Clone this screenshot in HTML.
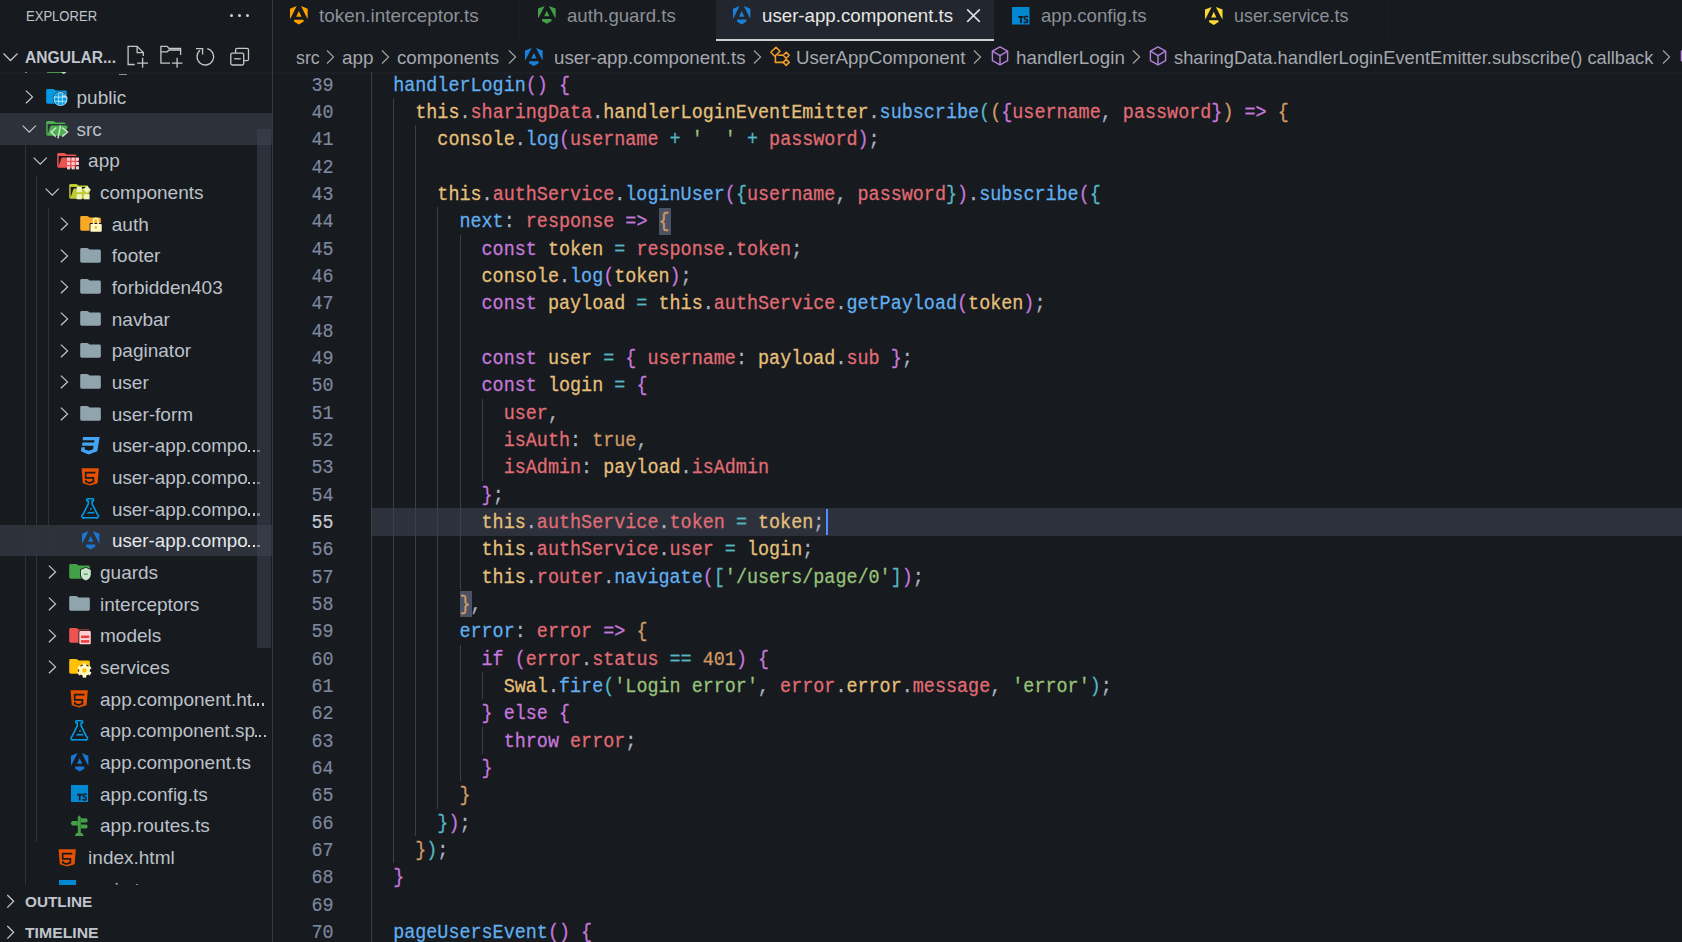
<!DOCTYPE html><html><head><meta charset="utf-8"><title>VS Code</title><style>
html,body{margin:0;padding:0;width:1682px;height:942px;overflow:hidden;background:#171a1f;}
body{position:relative;font-family:"Liberation Sans",sans-serif;}
.t{position:absolute;white-space:pre;}
.i{position:absolute;overflow:visible;}
.r{position:absolute;}
.code{position:absolute;white-space:pre;font-family:"Liberation Mono",monospace;}
</style></head><body>
<div class="r" style="left:0;top:0;width:272px;height:942px;overflow:hidden">
<div class="r" style="left:0;top:113.10px;width:272px;height:31.67px;background:#2c313a"></div>
<div class="r" style="left:0;top:524.81px;width:272px;height:31.67px;background:#2c313a"></div>
<div class="r" style="left:25px;top:144.77px;width:1px;height:760.08px;background:#2f333b"></div>
<div class="r" style="left:36px;top:176.44px;width:1px;height:665.07px;background:#2f333b"></div>
<div class="r" style="left:48px;top:208.11px;width:1px;height:348.37px;background:#2f333b"></div>
<svg class="i" style="left:24.80px;top:81.43px;width:16px;height:32px" viewBox="0 0 16 32"><path d="M0.9 9.6 L7.5 15.9 L0.9 22.2" fill="none" stroke="#c5c5c5" stroke-width="1.25"/></svg>
<svg class="i" style="left:46.20px;top:81.43px;width:30px;height:32px" viewBox="0 0 30 32"><path d="M13.844 7.536l-1.288-1.072A2 2 0 0 0 11.276 6H4a2 2 0 0 0-2 2v16a2 2 0 0 0 2 2h24a2 2 0 0 0 2-2V10a2 2 0 0 0-2-2H15.124a2 2 0 0 1-1.28-.464z" fill="#039be5" transform="translate(-1.27 3.55) scale(0.737)"/><circle cx="14.5" cy="18.1" r="7.6" fill="#171a1f"/><circle cx="14.5" cy="18.1" r="7" fill="#b3e5fc"/><g fill="#039be5"><path d="M9.2 14.6 Q11 12.2 12.6 12 L12.2 15.6 H9.2Z"/><rect x="13.2" y="12.2" width="2.6" height="3.4"/><path d="M16.4 12 Q18 12.2 19.8 14.6 H16.8Z"/><rect x="8.7" y="16.6" width="3.5" height="3.2"/><rect x="13.2" y="16.6" width="2.6" height="3.2"/><rect x="16.8" y="16.6" width="3.5" height="3.2"/><path d="M9.2 20.8 H12.2 L12.6 24.2 Q11 24 9.2 21.6Z"/><rect x="13.2" y="20.8" width="2.6" height="3.4"/><path d="M16.8 20.8 H19.8 Q18 24 16.4 24.2Z"/></g></svg>
<div class="t" style="left:76.50px;top:87.95px;font-size:19px;line-height:19px;color:#bcc1c9;font-weight:normal;">public</div>
<svg class="i" style="left:22.00px;top:113.10px;width:16px;height:32px" viewBox="0 0 16 32"><path d="M0.7 12.6 L7.25 19.2 L13.8 12.6" fill="none" stroke="#c5c5c5" stroke-width="1.25"/></svg>
<svg class="i" style="left:46.20px;top:113.10px;width:30px;height:32px" viewBox="0 0 30 32"><path d="M28.967 12H9.442a2 2 0 0 0-1.898 1.368L4 24V10h24a2 2 0 0 0-2-2H15.124a2 2 0 0 1-1.28-.464l-1.288-1.072A2 2 0 0 0 11.276 6H4a2 2 0 0 0-2 2v16a2 2 0 0 0 2 2h22l4.805-11.212A2 2 0 0 0 28.967 12z" fill="#4caf50" transform="translate(-1.27 3.55) scale(0.737)"/><g fill="none" stroke="#c8e6c9" stroke-width="1.5"><path d="M10.3 14.5 L5.1 19.1 L9.8 23.6"/><path d="M14.5 12.4 L12 25.3"/><path d="M16.1 14.5 L21.5 19.1 L16.1 23.6"/></g></svg>
<div class="t" style="left:76.50px;top:119.62px;font-size:19px;line-height:19px;color:#bcc1c9;font-weight:normal;">src</div>
<svg class="i" style="left:33.25px;top:144.77px;width:16px;height:32px" viewBox="0 0 16 32"><path d="M0.7 12.6 L7.25 19.2 L13.8 12.6" fill="none" stroke="#c5c5c5" stroke-width="1.25"/></svg>
<svg class="i" style="left:57.20px;top:144.77px;width:30px;height:32px" viewBox="0 0 30 32"><path d="M28.967 12H9.442a2 2 0 0 0-1.898 1.368L4 24V10h24a2 2 0 0 0-2-2H15.124a2 2 0 0 1-1.28-.464l-1.288-1.072A2 2 0 0 0 11.276 6H4a2 2 0 0 0-2 2v16a2 2 0 0 0 2 2h22l4.805-11.212A2 2 0 0 0 28.967 12z" fill="#ef5350" transform="translate(-1.27 3.55) scale(0.737)"/><g fill="#ffcdd2"><rect x="10.05" y="12.65" width="3.1" height="3.1"/><rect x="10.05" y="16.95" width="3.1" height="3.1"/><rect x="10.05" y="21.25" width="3.1" height="3.1"/><rect x="14.55" y="12.65" width="3.1" height="3.1"/><rect x="14.55" y="16.95" width="3.1" height="3.1"/><rect x="14.55" y="21.25" width="3.1" height="3.1"/><rect x="18.85" y="12.65" width="3.1" height="3.1"/><rect x="18.85" y="16.95" width="3.1" height="3.1"/><rect x="18.85" y="21.25" width="3.1" height="3.1"/></g></svg>
<div class="t" style="left:88.10px;top:151.29px;font-size:19px;line-height:19px;color:#bcc1c9;font-weight:normal;">app</div>
<svg class="i" style="left:44.50px;top:176.44px;width:16px;height:32px" viewBox="0 0 16 32"><path d="M0.7 12.6 L7.25 19.2 L13.8 12.6" fill="none" stroke="#c5c5c5" stroke-width="1.25"/></svg>
<svg class="i" style="left:69.20px;top:176.44px;width:30px;height:32px" viewBox="0 0 30 32"><path d="M28.967 12H9.442a2 2 0 0 0-1.898 1.368L4 24V10h24a2 2 0 0 0-2-2H15.124a2 2 0 0 1-1.28-.464l-1.288-1.072A2 2 0 0 0 11.276 6H4a2 2 0 0 0-2 2v16a2 2 0 0 0 2 2h22l4.805-11.212A2 2 0 0 0 28.967 12z" fill="#c0ca33" transform="translate(-1.27 3.55) scale(0.737)"/><g fill="#f0f4c3"><rect x="7.7" y="10.9" width="5.1" height="5.3"/><rect x="7.7" y="18.2" width="5.1" height="5.1"/><rect x="14.8" y="18.2" width="5.8" height="5.1"/><path d="M17.9 9.8 L21.5 13.4 L17.9 17 L14.3 13.4Z"/></g></svg>
<div class="t" style="left:100.00px;top:182.96px;font-size:19px;line-height:19px;color:#bcc1c9;font-weight:normal;">components</div>
<svg class="i" style="left:59.90px;top:208.11px;width:16px;height:32px" viewBox="0 0 16 32"><path d="M0.9 9.6 L7.5 15.9 L0.9 22.2" fill="none" stroke="#c5c5c5" stroke-width="1.25"/></svg>
<svg class="i" style="left:80.30px;top:208.11px;width:30px;height:32px" viewBox="0 0 30 32"><path d="M13.844 7.536l-1.288-1.072A2 2 0 0 0 11.276 6H4a2 2 0 0 0-2 2v16a2 2 0 0 0 2 2h24a2 2 0 0 0 2-2V10a2 2 0 0 0-2-2H15.124a2 2 0 0 1-1.28-.464z" fill="#f9a825" transform="translate(-1.27 3.55) scale(0.737)"/><rect x="9.6" y="15.1" width="12.9" height="9.5" rx="1" fill="#171a1f"/><rect x="10.4" y="15.9" width="11.3" height="7.9" rx="0.8" fill="#fff9c4"/><path d="M13.6 16.5 V12.6 A2.2 2.2 0 0 1 18 12.6 V16.5" fill="none" stroke="#fff9c4" stroke-width="1.6"/><circle cx="15.8" cy="19.5" r="1.2" fill="#f9a825"/></svg>
<div class="t" style="left:111.80px;top:214.63px;font-size:19px;line-height:19px;color:#bcc1c9;font-weight:normal;">auth</div>
<svg class="i" style="left:59.90px;top:239.78px;width:16px;height:32px" viewBox="0 0 16 32"><path d="M0.9 9.6 L7.5 15.9 L0.9 22.2" fill="none" stroke="#c5c5c5" stroke-width="1.25"/></svg>
<svg class="i" style="left:80.30px;top:239.78px;width:30px;height:32px" viewBox="0 0 30 32"><path d="M13.844 7.536l-1.288-1.072A2 2 0 0 0 11.276 6H4a2 2 0 0 0-2 2v16a2 2 0 0 0 2 2h24a2 2 0 0 0 2-2V10a2 2 0 0 0-2-2H15.124a2 2 0 0 1-1.28-.464z" fill="#90a4ae" transform="translate(-1.27 3.55) scale(0.737)"/></svg>
<div class="t" style="left:111.80px;top:246.30px;font-size:19px;line-height:19px;color:#bcc1c9;font-weight:normal;">footer</div>
<svg class="i" style="left:59.90px;top:271.45px;width:16px;height:32px" viewBox="0 0 16 32"><path d="M0.9 9.6 L7.5 15.9 L0.9 22.2" fill="none" stroke="#c5c5c5" stroke-width="1.25"/></svg>
<svg class="i" style="left:80.30px;top:271.45px;width:30px;height:32px" viewBox="0 0 30 32"><path d="M13.844 7.536l-1.288-1.072A2 2 0 0 0 11.276 6H4a2 2 0 0 0-2 2v16a2 2 0 0 0 2 2h24a2 2 0 0 0 2-2V10a2 2 0 0 0-2-2H15.124a2 2 0 0 1-1.28-.464z" fill="#90a4ae" transform="translate(-1.27 3.55) scale(0.737)"/></svg>
<div class="t" style="left:111.80px;top:277.97px;font-size:19px;line-height:19px;color:#bcc1c9;font-weight:normal;">forbidden403</div>
<svg class="i" style="left:59.90px;top:303.12px;width:16px;height:32px" viewBox="0 0 16 32"><path d="M0.9 9.6 L7.5 15.9 L0.9 22.2" fill="none" stroke="#c5c5c5" stroke-width="1.25"/></svg>
<svg class="i" style="left:80.30px;top:303.12px;width:30px;height:32px" viewBox="0 0 30 32"><path d="M13.844 7.536l-1.288-1.072A2 2 0 0 0 11.276 6H4a2 2 0 0 0-2 2v16a2 2 0 0 0 2 2h24a2 2 0 0 0 2-2V10a2 2 0 0 0-2-2H15.124a2 2 0 0 1-1.28-.464z" fill="#90a4ae" transform="translate(-1.27 3.55) scale(0.737)"/></svg>
<div class="t" style="left:111.80px;top:309.64px;font-size:19px;line-height:19px;color:#bcc1c9;font-weight:normal;">navbar</div>
<svg class="i" style="left:59.90px;top:334.79px;width:16px;height:32px" viewBox="0 0 16 32"><path d="M0.9 9.6 L7.5 15.9 L0.9 22.2" fill="none" stroke="#c5c5c5" stroke-width="1.25"/></svg>
<svg class="i" style="left:80.30px;top:334.79px;width:30px;height:32px" viewBox="0 0 30 32"><path d="M13.844 7.536l-1.288-1.072A2 2 0 0 0 11.276 6H4a2 2 0 0 0-2 2v16a2 2 0 0 0 2 2h24a2 2 0 0 0 2-2V10a2 2 0 0 0-2-2H15.124a2 2 0 0 1-1.28-.464z" fill="#90a4ae" transform="translate(-1.27 3.55) scale(0.737)"/></svg>
<div class="t" style="left:111.80px;top:341.31px;font-size:19px;line-height:19px;color:#bcc1c9;font-weight:normal;">paginator</div>
<svg class="i" style="left:59.90px;top:366.46px;width:16px;height:32px" viewBox="0 0 16 32"><path d="M0.9 9.6 L7.5 15.9 L0.9 22.2" fill="none" stroke="#c5c5c5" stroke-width="1.25"/></svg>
<svg class="i" style="left:80.30px;top:366.46px;width:30px;height:32px" viewBox="0 0 30 32"><path d="M13.844 7.536l-1.288-1.072A2 2 0 0 0 11.276 6H4a2 2 0 0 0-2 2v16a2 2 0 0 0 2 2h24a2 2 0 0 0 2-2V10a2 2 0 0 0-2-2H15.124a2 2 0 0 1-1.28-.464z" fill="#90a4ae" transform="translate(-1.27 3.55) scale(0.737)"/></svg>
<div class="t" style="left:111.80px;top:372.98px;font-size:19px;line-height:19px;color:#bcc1c9;font-weight:normal;">user</div>
<svg class="i" style="left:59.90px;top:398.13px;width:16px;height:32px" viewBox="0 0 16 32"><path d="M0.9 9.6 L7.5 15.9 L0.9 22.2" fill="none" stroke="#c5c5c5" stroke-width="1.25"/></svg>
<svg class="i" style="left:80.30px;top:398.13px;width:30px;height:32px" viewBox="0 0 30 32"><path d="M13.844 7.536l-1.288-1.072A2 2 0 0 0 11.276 6H4a2 2 0 0 0-2 2v16a2 2 0 0 0 2 2h24a2 2 0 0 0 2-2V10a2 2 0 0 0-2-2H15.124a2 2 0 0 1-1.28-.464z" fill="#90a4ae" transform="translate(-1.27 3.55) scale(0.737)"/></svg>
<div class="t" style="left:111.80px;top:404.65px;font-size:19px;line-height:19px;color:#bcc1c9;font-weight:normal;">user-form</div>
<svg class="i" style="left:80.30px;top:429.80px;width:30px;height:32px" viewBox="0 0 30 32"><path d="M3.1 7.1 L19.7 7.1 L17.3 21.2 L8.6 24.4 L0.9 21.3 L1.5 17.2 L4.9 17.2 L4.6 19.4 L8.6 20.8 L13 19.3 L13.6 15.7 L2.0 15.7 L2.5 12.6 L14.1 12.6 L14.5 10.2 L2.6 10.2 Z" fill="#42a5f5"/></svg>
<div class="t" id="tree12" style="left:111.80px;top:436.32px;font-size:19px;line-height:19px;color:#bcc1c9;font-weight:normal;transform:scaleX(0.9882);transform-origin:0 0;">user-app.compo</div>
<svg class="i" style="left:80.30px;top:461.47px;width:30px;height:32px" viewBox="0 0 30 32"><path d="M1.6 7.3 H18.8 L17.6 22.2 L10.2 24.6 L2.8 22.2 Z" fill="#e65100"/><path d="M15.4 11.6 H5.7 V16.8 H13.4 V20.6 L9.5 22 L5.8 20.7 V18.9" fill="none" stroke="#171a1f" stroke-width="1.7"/></svg>
<div class="t" id="tree13" style="left:111.80px;top:467.99px;font-size:19px;line-height:19px;color:#bcc1c9;font-weight:normal;transform:scaleX(0.9882);transform-origin:0 0;">user-app.compo</div>
<svg class="i" style="left:80.30px;top:493.14px;width:30px;height:32px" viewBox="0 0 30 32"><path d="M7.8 5.8 H12.6 A1.15 1.15 0 0 1 12.6 8.1 H12.1 V10.8 L17.4 21.4 A1.9 1.9 0 0 1 15.7 24.8 H4.7 A1.9 1.9 0 0 1 3 21.4 L8.3 10.8 V8.1 H7.8 A1.15 1.15 0 0 1 7.8 5.8 Z" fill="none" stroke="#039be5" stroke-width="1.6"/><path d="M6.6 20.6 Q8.4 18.2 10.2 18.8 Q12 19.4 13.8 18.4 L14.6 20.6 Z" fill="#039be5"/><circle cx="11" cy="15.9" r="0.95" fill="#039be5"/></svg>
<div class="t" id="tree14" style="left:111.80px;top:499.66px;font-size:19px;line-height:19px;color:#bcc1c9;font-weight:normal;transform:scaleX(0.9882);transform-origin:0 0;">user-app.compo</div>
<svg class="i" style="left:81.90px;top:531.31px;width:17.35px;height:18.50px" viewBox="0 0 100 100" preserveAspectRatio="none"><g fill="#1976d2"><path d="M38 0 L0 14.5 L0 69 L6 60 Z"/><path d="M62 0 L100 14.5 L100 69 L94 60 Z"/><path d="M50 27 L65 58 H35 Z"/><path d="M24 73.5 H76 L77.5 84 L50 100 L22.5 84 Z"/></g></svg>
<div class="t" id="tree15" style="left:111.80px;top:531.33px;font-size:19px;line-height:19px;color:#e4e7eb;font-weight:normal;transform:scaleX(0.9882);transform-origin:0 0;">user-app.compo</div>
<svg class="i" style="left:48.20px;top:556.48px;width:16px;height:32px" viewBox="0 0 16 32"><path d="M0.9 9.6 L7.5 15.9 L0.9 22.2" fill="none" stroke="#c5c5c5" stroke-width="1.25"/></svg>
<svg class="i" style="left:69.20px;top:556.48px;width:30px;height:32px" viewBox="0 0 30 32"><path d="M13.844 7.536l-1.288-1.072A2 2 0 0 0 11.276 6H4a2 2 0 0 0-2 2v16a2 2 0 0 0 2 2h24a2 2 0 0 0 2-2V10a2 2 0 0 0-2-2H15.124a2 2 0 0 1-1.28-.464z" fill="#43a047" transform="translate(-1.27 3.55) scale(0.737)"/><path d="M16.8 11 L22.6 13.6 V18.2 C22.6 21.6 20.4 24.2 16.8 25.4 C13.2 24.2 11 21.6 11 18.2 V13.6Z" fill="#171a1f"/><path d="M16.8 11.75 L21.8 14 V18.2 C21.8 21.2 19.8 23.5 16.8 24.6 C13.8 23.5 11.85 21.2 11.85 18.2 V14Z" fill="#c8e6c9"/><rect x="14.8" y="17.5" width="4" height="1.3" fill="#43a047"/></svg>
<div class="t" style="left:100.00px;top:563.00px;font-size:19px;line-height:19px;color:#bcc1c9;font-weight:normal;">guards</div>
<svg class="i" style="left:48.20px;top:588.15px;width:16px;height:32px" viewBox="0 0 16 32"><path d="M0.9 9.6 L7.5 15.9 L0.9 22.2" fill="none" stroke="#c5c5c5" stroke-width="1.25"/></svg>
<svg class="i" style="left:69.20px;top:588.15px;width:30px;height:32px" viewBox="0 0 30 32"><path d="M13.844 7.536l-1.288-1.072A2 2 0 0 0 11.276 6H4a2 2 0 0 0-2 2v16a2 2 0 0 0 2 2h24a2 2 0 0 0 2-2V10a2 2 0 0 0-2-2H15.124a2 2 0 0 1-1.28-.464z" fill="#90a4ae" transform="translate(-1.27 3.55) scale(0.737)"/></svg>
<div class="t" style="left:100.00px;top:594.67px;font-size:19px;line-height:19px;color:#bcc1c9;font-weight:normal;">interceptors</div>
<svg class="i" style="left:48.20px;top:619.82px;width:16px;height:32px" viewBox="0 0 16 32"><path d="M0.9 9.6 L7.5 15.9 L0.9 22.2" fill="none" stroke="#c5c5c5" stroke-width="1.25"/></svg>
<svg class="i" style="left:69.20px;top:619.82px;width:30px;height:32px" viewBox="0 0 30 32"><path d="M13.844 7.536l-1.288-1.072A2 2 0 0 0 11.276 6H4a2 2 0 0 0-2 2v16a2 2 0 0 0 2 2h24a2 2 0 0 0 2-2V10a2 2 0 0 0-2-2H15.124a2 2 0 0 1-1.28-.464z" fill="#ef5350" transform="translate(-1.27 3.55) scale(0.737)"/><rect x="9.5" y="10.2" width="13.1" height="14.9" rx="1.5" fill="#171a1f"/><rect x="10.3" y="11" width="11.5" height="13.3" rx="1.1" fill="#ffcdd2"/><rect x="12" y="15.6" width="8.3" height="2.35" fill="#e53935"/><rect x="12" y="20.2" width="8.3" height="2.4" fill="#e53935"/></svg>
<div class="t" style="left:100.00px;top:626.34px;font-size:19px;line-height:19px;color:#bcc1c9;font-weight:normal;">models</div>
<svg class="i" style="left:48.20px;top:651.49px;width:16px;height:32px" viewBox="0 0 16 32"><path d="M0.9 9.6 L7.5 15.9 L0.9 22.2" fill="none" stroke="#c5c5c5" stroke-width="1.25"/></svg>
<svg class="i" style="left:69.20px;top:651.49px;width:30px;height:32px" viewBox="0 0 30 32"><path d="M13.844 7.536l-1.288-1.072A2 2 0 0 0 11.276 6H4a2 2 0 0 0-2 2v16a2 2 0 0 0 2 2h24a2 2 0 0 0 2-2V10a2 2 0 0 0-2-2H15.124a2 2 0 0 1-1.28-.464z" fill="#ffc107" transform="translate(-1.27 3.55) scale(0.737)"/><g transform="translate(15.45 19.5)"><circle r="6.3" fill="#171a1f"/><g fill="#fff9c4"><circle r="5.3"/><rect x="-1.75" y="-7.1" width="3.5" height="3.4" transform="rotate(0)"/><rect x="-1.75" y="-7.1" width="3.5" height="3.4" transform="rotate(60)"/><rect x="-1.75" y="-7.1" width="3.5" height="3.4" transform="rotate(120)"/><rect x="-1.75" y="-7.1" width="3.5" height="3.4" transform="rotate(180)"/><rect x="-1.75" y="-7.1" width="3.5" height="3.4" transform="rotate(240)"/><rect x="-1.75" y="-7.1" width="3.5" height="3.4" transform="rotate(300)"/></g><circle r="2.3" fill="#ffc107"/></g></svg>
<div class="t" style="left:100.00px;top:658.01px;font-size:19px;line-height:19px;color:#bcc1c9;font-weight:normal;">services</div>
<svg class="i" style="left:69.20px;top:683.16px;width:30px;height:32px" viewBox="0 0 30 32"><path d="M1.6 7.3 H18.8 L17.6 22.2 L10.2 24.6 L2.8 22.2 Z" fill="#e65100"/><path d="M15.4 11.6 H5.7 V16.8 H13.4 V20.6 L9.5 22 L5.8 20.7 V18.9" fill="none" stroke="#171a1f" stroke-width="1.7"/></svg>
<div class="t" id="tree20" style="left:100.00px;top:689.68px;font-size:19px;line-height:19px;color:#bcc1c9;font-weight:normal;">app.component.ht</div>
<svg class="i" style="left:69.20px;top:714.83px;width:30px;height:32px" viewBox="0 0 30 32"><path d="M7.8 5.8 H12.6 A1.15 1.15 0 0 1 12.6 8.1 H12.1 V10.8 L17.4 21.4 A1.9 1.9 0 0 1 15.7 24.8 H4.7 A1.9 1.9 0 0 1 3 21.4 L8.3 10.8 V8.1 H7.8 A1.15 1.15 0 0 1 7.8 5.8 Z" fill="none" stroke="#039be5" stroke-width="1.6"/><path d="M6.6 20.6 Q8.4 18.2 10.2 18.8 Q12 19.4 13.8 18.4 L14.6 20.6 Z" fill="#039be5"/><circle cx="11" cy="15.9" r="0.95" fill="#039be5"/></svg>
<div class="t" id="tree21" style="left:100.00px;top:721.35px;font-size:19px;line-height:19px;color:#bcc1c9;font-weight:normal;transform:scaleX(0.9913);transform-origin:0 0;">app.component.sp</div>
<svg class="i" style="left:70.80px;top:753.00px;width:17.35px;height:18.50px" viewBox="0 0 100 100" preserveAspectRatio="none"><g fill="#1976d2"><path d="M38 0 L0 14.5 L0 69 L6 60 Z"/><path d="M62 0 L100 14.5 L100 69 L94 60 Z"/><path d="M50 27 L65 58 H35 Z"/><path d="M24 73.5 H76 L77.5 84 L50 100 L22.5 84 Z"/></g></svg>
<div class="t" style="left:100.00px;top:753.02px;font-size:19px;line-height:19px;color:#bcc1c9;font-weight:normal;">app.component.ts</div>
<svg class="i" style="left:70.90px;top:784.87px;width:17.10px;height:17.00px" viewBox="0 0 100 100" preserveAspectRatio="none"><rect x="0" y="0" width="100" height="100" fill="#0288d1"/><path d="M36 52 H66 V62 H56 V91 H46 V62 H36 Z" fill="#171a1f"/><path d="M91 58.5 Q86 52.5 79.5 53 Q70.5 54 71 62.5 Q71.5 69 80 71 Q89 73 89 80.5 Q88.5 89 79 89 Q71.5 89 67.5 84" fill="none" stroke="#171a1f" stroke-width="9"/></svg>
<div class="t" style="left:100.00px;top:784.69px;font-size:19px;line-height:19px;color:#bcc1c9;font-weight:normal;">app.config.ts</div>
<svg class="i" style="left:69.20px;top:809.84px;width:30px;height:32px" viewBox="0 0 30 32"><g fill="#43a047"><path d="M8.8 7.2 L10.3 5.2 L11.8 7.2 V23.4 H8.8Z"/><path d="M11.8 8.3 H17.6 L18.9 10.45 L17.6 12.6 H11.8Z"/><path d="M8.8 11.1 H3 L1.7 13.35 L3 15.6 H8.8Z"/><path d="M11.8 14.4 H17.6 L18.9 16.45 L17.6 18.5 H11.8Z"/><path d="M7.4 23 H13.2 L14.8 26 H5.7Z"/></g></svg>
<div class="t" style="left:100.00px;top:816.36px;font-size:19px;line-height:19px;color:#bcc1c9;font-weight:normal;">app.routes.ts</div>
<svg class="i" style="left:57.20px;top:841.51px;width:30px;height:32px" viewBox="0 0 30 32"><path d="M1.6 7.3 H18.8 L17.6 22.2 L10.2 24.6 L2.8 22.2 Z" fill="#e65100"/><path d="M15.4 11.6 H5.7 V16.8 H13.4 V20.6 L9.5 22 L5.8 20.7 V18.9" fill="none" stroke="#171a1f" stroke-width="1.7"/></svg>
<div class="t" style="left:88.10px;top:848.03px;font-size:19px;line-height:19px;color:#bcc1c9;font-weight:normal;">index.html</div>
<svg class="i" style="left:58.90px;top:879.88px;width:17.10px;height:17.00px" viewBox="0 0 100 100" preserveAspectRatio="none"><rect x="0" y="0" width="100" height="100" fill="#0288d1"/><path d="M36 52 H66 V62 H56 V91 H46 V62 H36 Z" fill="#171a1f"/><path d="M91 58.5 Q86 52.5 79.5 53 Q70.5 54 71 62.5 Q71.5 69 80 71 Q89 73 89 80.5 Q88.5 89 79 89 Q71.5 89 67.5 84" fill="none" stroke="#171a1f" stroke-width="9"/></svg>
<div class="t" style="left:88.10px;top:879.70px;font-size:19px;line-height:19px;color:#bcc1c9;font-weight:normal;">main.ts</div>
<div class="r" style="left:247.90px;top:450.10px;width:2.3px;height:2.3px;background:#bcc1c9"></div>
<div class="r" style="left:252.60px;top:450.10px;width:2.3px;height:2.3px;background:#bcc1c9"></div>
<div class="r" style="left:257.30px;top:450.10px;width:2.3px;height:2.3px;background:#bcc1c9"></div>
<div class="r" style="left:247.90px;top:481.77px;width:2.3px;height:2.3px;background:#bcc1c9"></div>
<div class="r" style="left:252.60px;top:481.77px;width:2.3px;height:2.3px;background:#bcc1c9"></div>
<div class="r" style="left:257.30px;top:481.77px;width:2.3px;height:2.3px;background:#bcc1c9"></div>
<div class="r" style="left:247.90px;top:513.44px;width:2.3px;height:2.3px;background:#bcc1c9"></div>
<div class="r" style="left:252.60px;top:513.44px;width:2.3px;height:2.3px;background:#bcc1c9"></div>
<div class="r" style="left:257.30px;top:513.44px;width:2.3px;height:2.3px;background:#bcc1c9"></div>
<div class="r" style="left:247.90px;top:545.11px;width:2.3px;height:2.3px;background:#e4e7eb"></div>
<div class="r" style="left:252.60px;top:545.11px;width:2.3px;height:2.3px;background:#e4e7eb"></div>
<div class="r" style="left:257.30px;top:545.11px;width:2.3px;height:2.3px;background:#e4e7eb"></div>
<div class="r" style="left:252.80px;top:703.46px;width:2.3px;height:2.3px;background:#bcc1c9"></div>
<div class="r" style="left:257.20px;top:703.46px;width:2.3px;height:2.3px;background:#bcc1c9"></div>
<div class="r" style="left:261.70px;top:703.46px;width:2.3px;height:2.3px;background:#bcc1c9"></div>
<div class="r" style="left:254.70px;top:735.13px;width:2.3px;height:2.3px;background:#bcc1c9"></div>
<div class="r" style="left:259.20px;top:735.13px;width:2.3px;height:2.3px;background:#bcc1c9"></div>
<div class="r" style="left:263.60px;top:735.13px;width:2.3px;height:2.3px;background:#bcc1c9"></div>
<div class="r" style="left:257px;top:129px;width:14px;height:519px;background:rgba(62,68,80,0.55)"></div>
<div class="r" style="left:0;top:0;width:272px;height:72px;background:#171a1f"></div>
<div class="r" style="left:0;top:72px;width:272px;height:3px;background:linear-gradient(#1d2025,#171a1f)"></div>
<div class="r" style="left:25px;top:72px;width:1.5px;height:1.2px;background:#b0b0b0;opacity:.7"></div>
<div class="r" style="left:46.7px;top:72px;width:19.5px;height:1.3px;background:#4caf50;opacity:.85"></div>
<svg class="i" style="left:60px;top:72px;width:7px;height:3px" viewBox="0 0 7 3"><path d="M0.8 0 H6.6 L3.7 2.2Z" fill="#c8e6c9" opacity=".85"/></svg>
<div class="r" style="left:119px;top:74px;width:8.3px;height:1.2px;background:#9aa0a8;opacity:.9"></div>
<div class="t" style="left:26.00px;top:8.08px;font-size:15.5px;line-height:15.5px;color:#c0c5cd;font-weight:normal;transform:scaleX(0.8420);transform-origin:0 0;">EXPLORER</div>
<div class="r" style="left:230.3px;top:13.7px;width:3px;height:3px;border-radius:50%;background:#d0d0d0"></div>
<div class="r" style="left:238.3px;top:13.7px;width:3px;height:3px;border-radius:50%;background:#d0d0d0"></div>
<div class="r" style="left:246.1px;top:13.7px;width:3px;height:3px;border-radius:50%;background:#d0d0d0"></div>
<svg class="i" style="left:0.00px;top:40.00px;width:22px;height:32px" viewBox="0 0 22 32"><path d="M3.5 13.5 L10.5 20.5 L17.5 13.5" fill="none" stroke="#c5c5c5" stroke-width="1.3"/></svg>
<div class="t" style="left:25.00px;top:50.39px;font-size:15.6px;line-height:15.6px;color:#c0c5cd;font-weight:bold;">ANGULAR...</div>
<svg class="i" style="left:120px;top:35px;width:160px;height:45px" viewBox="120 35 160 45"><g fill="none" stroke="#c5c5c5" stroke-width="1.3"><path d="M134.7 64.5 H128.1 V46.4 H137.1 L143.3 52.6 V56"/><path d="M137.1 46.4 V52.6 H143.3"/><path d="M137.1 63.1 H148.1 M142.6 57.8 V67.8"/><path d="M170 63.1 H160.9 V46.4 H167 L169.2 48.5 H180.6 V55"/><path d="M160.9 51.8 H167 L169.2 50 H180.6"/><path d="M171.9 63.1 H182.4 M177.1 57.8 V67.8"/><path d="M207.3 48.6 A8.3 8.3 0 1 1 200 50.3"/><path d="M196 48.6 H202.6 V54.4"/><path d="M235.6 53.1 V49.8 A1.5 1.5 0 0 1 237.1 48.3 H247 A1.5 1.5 0 0 1 248.5 49.8 V59.2 A1.5 1.5 0 0 1 247 60.7 H243.7"/><rect x="230.8" y="53.1" width="12.9" height="11.9" rx="1.5"/><path d="M234.2 58.8 H240.8"/></g></svg>
<div class="r" style="left:0;top:885px;width:272px;height:57px;background:#171a1f"></div>
<svg class="i" style="left:0.00px;top:885.00px;width:22px;height:32px" viewBox="0 0 22 32"><path d="M7.3 10 L13.6 16.3 L7.3 22.6" fill="none" stroke="#c5c5c5" stroke-width="1.3"/></svg>
<div class="t" style="left:25.00px;top:894.45px;font-size:15.3px;line-height:15.3px;color:#c0c5cd;font-weight:bold;">OUTLINE</div>
<svg class="i" style="left:0.00px;top:916.00px;width:22px;height:32px" viewBox="0 0 22 32"><path d="M7.3 10 L13.6 16.3 L7.3 22.6" fill="none" stroke="#c5c5c5" stroke-width="1.3"/></svg>
<div class="t" style="left:25.00px;top:924.85px;font-size:15.3px;line-height:15.3px;color:#c0c5cd;font-weight:bold;transform:scaleX(1.0300);transform-origin:0 0;">TIMELINE</div>
</div>
<div class="r" style="left:272px;top:0;width:1px;height:942px;background:#38393e"></div>
<div class="r" style="left:716px;top:0;width:278px;height:39px;background:#22262e"></div>
<div class="r" style="left:519px;top:0;width:1px;height:41px;background:#1b1d21"></div>
<div class="r" style="left:1186px;top:0;width:1px;height:41px;background:#1b1d21"></div>
<div class="r" style="left:1387px;top:0;width:1px;height:41px;background:#1b1d21"></div>
<div class="r" style="left:716px;top:39px;width:278px;height:2px;background:#cfcfcf"></div>
<svg class="i" style="left:289.80px;top:6.20px;width:17.70px;height:18.60px" viewBox="0 0 100 100" preserveAspectRatio="none"><g fill="#ffa000"><path d="M38 0 L0 14.5 L0 69 L6 60 Z"/><path d="M62 0 L100 14.5 L100 69 L94 60 Z"/><path d="M50 27 L65 58 H35 Z"/><path d="M24 73.5 H76 L77.5 84 L50 100 L22.5 84 Z"/></g></svg>
<svg class="i" style="left:537.70px;top:6.20px;width:17.60px;height:17.80px" viewBox="0 0 100 100" preserveAspectRatio="none"><g fill="#43a047"><path d="M38 0 L0 14.5 L0 69 L6 60 Z"/><path d="M62 0 L100 14.5 L100 69 L94 60 Z"/><path d="M50 27 L65 58 H35 Z"/><path d="M24 73.5 H76 L77.5 84 L50 100 L22.5 84 Z"/></g></svg>
<svg class="i" style="left:732.80px;top:6.20px;width:17.40px;height:18.40px" viewBox="0 0 100 100" preserveAspectRatio="none"><g fill="#1c80d8"><path d="M38 0 L0 14.5 L0 69 L6 60 Z"/><path d="M62 0 L100 14.5 L100 69 L94 60 Z"/><path d="M50 27 L65 58 H35 Z"/><path d="M24 73.5 H76 L77.5 84 L50 100 L22.5 84 Z"/></g></svg>
<svg class="i" style="left:1011.70px;top:6.80px;width:17.50px;height:17.50px" viewBox="0 0 100 100" preserveAspectRatio="none"><rect x="0" y="0" width="100" height="100" fill="#0288d1"/><path d="M36 52 H66 V62 H56 V91 H46 V62 H36 Z" fill="#171a1f"/><path d="M91 58.5 Q86 52.5 79.5 53 Q70.5 54 71 62.5 Q71.5 69 80 71 Q89 73 89 80.5 Q88.5 89 79 89 Q71.5 89 67.5 84" fill="none" stroke="#171a1f" stroke-width="9"/></svg>
<svg class="i" style="left:1204.90px;top:6.50px;width:17.50px;height:18.00px" viewBox="0 0 100 100" preserveAspectRatio="none"><g fill="#fdd835"><path d="M38 0 L0 14.5 L0 69 L6 60 Z"/><path d="M62 0 L100 14.5 L100 69 L94 60 Z"/><path d="M50 27 L65 58 H35 Z"/><path d="M24 73.5 H76 L77.5 84 L50 100 L22.5 84 Z"/></g></svg>
<div class="t" id="tab1" style="left:318.90px;top:5.82px;font-size:19px;line-height:19px;color:#8b9098;font-weight:normal;transform:scaleX(0.9950);transform-origin:0 0;">token.interceptor.ts</div>
<div class="t" id="tab2" style="left:566.60px;top:5.82px;font-size:19px;line-height:19px;color:#8b9098;font-weight:normal;transform:scaleX(0.9800);transform-origin:0 0;">auth.guard.ts</div>
<div class="t" id="tab3" style="left:762.00px;top:5.82px;font-size:19px;line-height:19px;color:#e6e6e6;font-weight:normal;transform:scaleX(0.9835);transform-origin:0 0;">user-app.component.ts</div>
<div class="t" id="tab4" style="left:1040.50px;top:5.82px;font-size:19px;line-height:19px;color:#8b9098;font-weight:normal;transform:scaleX(0.9795);transform-origin:0 0;">app.config.ts</div>
<div class="t" id="tab5" style="left:1233.80px;top:5.82px;font-size:19px;line-height:19px;color:#8b9098;font-weight:normal;transform:scaleX(0.9417);transform-origin:0 0;">user.service.ts</div>
<svg class="i" style="left:960px;top:0;width:30px;height:30px" viewBox="960 0 30 30"><path d="M967.2 9.4 L979.8 21.9 M979.8 9.4 L967.2 21.9" stroke="#e0e0e0" stroke-width="1.5"/></svg>
<div class="t" id="bc1" style="left:296.00px;top:47.92px;font-size:19px;line-height:19px;color:#a4a8ae;font-weight:normal;transform:scaleX(0.9374);transform-origin:0 0;">src</div>
<svg class="i" style="left:326.40px;top:49px;width:10px;height:16px" viewBox="0 0 10 16"><path d="M1 1.5 L7.6 8 L1 14.5" fill="none" stroke="#a0a0a0" stroke-width="1.2"/></svg>
<div class="t" id="bc2" style="left:341.80px;top:47.92px;font-size:19px;line-height:19px;color:#a4a8ae;font-weight:normal;transform:scaleX(0.9940);transform-origin:0 0;">app</div>
<svg class="i" style="left:381.00px;top:49px;width:10px;height:16px" viewBox="0 0 10 16"><path d="M1 1.5 L7.6 8 L1 14.5" fill="none" stroke="#a0a0a0" stroke-width="1.2"/></svg>
<div class="t" id="bc3" style="left:397.10px;top:47.92px;font-size:19px;line-height:19px;color:#a4a8ae;font-weight:normal;transform:scaleX(0.9864);transform-origin:0 0;">components</div>
<svg class="i" style="left:507.60px;top:49px;width:10px;height:16px" viewBox="0 0 10 16"><path d="M1 1.5 L7.6 8 L1 14.5" fill="none" stroke="#a0a0a0" stroke-width="1.2"/></svg>
<svg class="i" style="left:524.70px;top:47.60px;width:17.70px;height:18.10px" viewBox="0 0 100 100" preserveAspectRatio="none"><g fill="#1c80d8"><path d="M38 0 L0 14.5 L0 69 L6 60 Z"/><path d="M62 0 L100 14.5 L100 69 L94 60 Z"/><path d="M50 27 L65 58 H35 Z"/><path d="M24 73.5 H76 L77.5 84 L50 100 L22.5 84 Z"/></g></svg>
<div class="t" id="bc4" style="left:554.20px;top:47.92px;font-size:19px;line-height:19px;color:#a4a8ae;font-weight:normal;transform:scaleX(0.9855);transform-origin:0 0;">user-app.component.ts</div>
<svg class="i" style="left:753.00px;top:49px;width:10px;height:16px" viewBox="0 0 10 16"><path d="M1 1.5 L7.6 8 L1 14.5" fill="none" stroke="#a0a0a0" stroke-width="1.2"/></svg>
<svg class="i" style="left:764px;top:42px;width:32px;height:28px" viewBox="764 42 32 28"><g fill="none" stroke="#ee9d28" stroke-width="1.6" stroke-linejoin="round"><path d="M770.8 52.3 L776 47.2 L780 51.2 L774.8 56.3 Z"/><path d="M775.4 55.6 V62.4 H783.2"/><path d="M777.6 55.2 H783.2"/><path d="M783.2 55.2 L786.2 52.2 L789.2 55.2 L786.2 58.2 Z"/><path d="M783.2 62.4 L786.2 59.4 L789.2 62.4 L786.2 65.4 Z"/></g></svg>
<div class="t" id="bc5" style="left:796.00px;top:47.92px;font-size:19px;line-height:19px;color:#a4a8ae;font-weight:normal;transform:scaleX(0.9836);transform-origin:0 0;">UserAppComponent</div>
<svg class="i" style="left:973.00px;top:49px;width:10px;height:16px" viewBox="0 0 10 16"><path d="M1 1.5 L7.6 8 L1 14.5" fill="none" stroke="#a0a0a0" stroke-width="1.2"/></svg>
<svg class="i" style="left:990.50px;top:46.10px;width:18px;height:20px" viewBox="0 0 18 20"><g fill="none" stroke="#b180d7" stroke-width="1.45" stroke-linejoin="round"><path d="M9 0.9 L16.6 5.2 V14.6 L9 18.9 L1.4 14.6 V5.2 Z"/><path d="M1.4 5.2 L9 9.6 L16.6 5.2"/><path d="M9 9.6 V18.9"/></g></svg>
<div class="t" id="bc6" style="left:1016.00px;top:47.92px;font-size:19px;line-height:19px;color:#a4a8ae;font-weight:normal;transform:scaleX(0.9907);transform-origin:0 0;">handlerLogin</div>
<svg class="i" style="left:1132.40px;top:49px;width:10px;height:16px" viewBox="0 0 10 16"><path d="M1 1.5 L7.6 8 L1 14.5" fill="none" stroke="#a0a0a0" stroke-width="1.2"/></svg>
<svg class="i" style="left:1149.30px;top:46.10px;width:18px;height:20px" viewBox="0 0 18 20"><g fill="none" stroke="#b180d7" stroke-width="1.45" stroke-linejoin="round"><path d="M9 0.9 L16.6 5.2 V14.6 L9 18.9 L1.4 14.6 V5.2 Z"/><path d="M1.4 5.2 L9 9.6 L16.6 5.2"/><path d="M9 9.6 V18.9"/></g></svg>
<div class="t" id="bc7" style="left:1174.00px;top:47.92px;font-size:19px;line-height:19px;color:#a4a8ae;font-weight:normal;transform:scaleX(0.9617);transform-origin:0 0;">sharingData.handlerLoginEventEmitter.subscribe() callback</div>
<svg class="i" style="left:1662.00px;top:49px;width:10px;height:16px" viewBox="0 0 10 16"><path d="M1 1.5 L7.6 8 L1 14.5" fill="none" stroke="#a0a0a0" stroke-width="1.2"/></svg>
<svg class="i" style="left:1679.50px;top:46.10px;width:18px;height:20px" viewBox="0 0 18 20"><g fill="none" stroke="#b180d7" stroke-width="1.45" stroke-linejoin="round"><path d="M9 0.9 L16.6 5.2 V14.6 L9 18.9 L1.4 14.6 V5.2 Z"/><path d="M1.4 5.2 L9 9.6 L16.6 5.2"/><path d="M9 9.6 V18.9"/></g></svg>
<div class="r" style="left:273px;top:72px;width:1409px;height:3px;background:linear-gradient(#1d2025,#171a1f)"></div>
<div class="r" style="left:372px;top:508px;width:1310px;height:28px;background:#2c313c"></div>
<div class="r" style="left:371px;top:72.00px;width:1px;height:873.36px;background:#3b3f48"></div>
<div class="r" style="left:393px;top:98.03px;width:1px;height:765.32px;background:#3b3f48"></div>
<div class="r" style="left:415px;top:125.37px;width:1px;height:710.66px;background:#3b3f48"></div>
<div class="r" style="left:437px;top:207.37px;width:1px;height:601.33px;background:#3b3f48"></div>
<div class="r" style="left:460px;top:234.70px;width:1px;height:355.33px;background:#3b3f48"></div>
<div class="r" style="left:460px;top:644.69px;width:1px;height:136.66px;background:#3b3f48"></div>
<div class="r" style="left:482px;top:398.70px;width:1px;height:82.00px;background:#3b3f48"></div>
<div class="r" style="left:482px;top:672.03px;width:1px;height:27.33px;background:#3b3f48"></div>
<div class="r" style="left:482px;top:726.69px;width:1px;height:27.33px;background:#3b3f48"></div>
<div class="r" style="left:659.06px;top:207.87px;width:11.56px;height:26.83px;background:#4b5263"></div>
<div class="r" style="left:459.98px;top:590.53px;width:11.56px;height:26.83px;background:#4b5263"></div>
<div class="code" style="left:0;top:70.70px;width:333.5px;text-align:right;font-size:18.43px;line-height:27.333px;color:#7e889e;padding-top:2.2px;transform:scaleY(1.08);transform-origin:0 20.78px;-webkit-text-stroke:0.15px currentColor">39</div>
<div class="code" style="left:371.0px;top:70.70px;font-size:18.43px;line-height:27.333px;color:#abb2bf;padding-top:2.2px;transform:scaleY(1.08);transform-origin:0 20.78px;-webkit-text-stroke:0.25px currentColor">  <span style="color:#61afef">handlerLogin</span><span style="color:#c678dd">()</span> <span style="color:#c678dd">{</span></div>
<div class="code" style="left:0;top:98.03px;width:333.5px;text-align:right;font-size:18.43px;line-height:27.333px;color:#7e889e;padding-top:2.2px;transform:scaleY(1.08);transform-origin:0 20.78px;-webkit-text-stroke:0.15px currentColor">40</div>
<div class="code" style="left:371.0px;top:98.03px;font-size:18.43px;line-height:27.333px;color:#abb2bf;padding-top:2.2px;transform:scaleY(1.08);transform-origin:0 20.78px;-webkit-text-stroke:0.25px currentColor">    <span style="color:#e5c07b">this</span><span style="color:#abb2bf">.</span><span style="color:#e06c75">sharingData</span><span style="color:#abb2bf">.</span><span style="color:#e5c07b">handlerLoginEventEmitter</span><span style="color:#abb2bf">.</span><span style="color:#61afef">subscribe</span><span style="color:#56b6c2">(</span><span style="color:#d19a66">(</span><span style="color:#c678dd">{</span><span style="color:#e06c75">username</span><span style="color:#abb2bf">,</span> <span style="color:#e06c75">password</span><span style="color:#c678dd">}</span><span style="color:#d19a66">)</span> <span style="color:#c678dd">=&gt;</span> <span style="color:#d19a66">{</span></div>
<div class="code" style="left:0;top:125.37px;width:333.5px;text-align:right;font-size:18.43px;line-height:27.333px;color:#7e889e;padding-top:2.2px;transform:scaleY(1.08);transform-origin:0 20.78px;-webkit-text-stroke:0.15px currentColor">41</div>
<div class="code" style="left:371.0px;top:125.37px;font-size:18.43px;line-height:27.333px;color:#abb2bf;padding-top:2.2px;transform:scaleY(1.08);transform-origin:0 20.78px;-webkit-text-stroke:0.25px currentColor">      <span style="color:#e5c07b">console</span><span style="color:#abb2bf">.</span><span style="color:#61afef">log</span><span style="color:#c678dd">(</span><span style="color:#e06c75">username</span> <span style="color:#56b6c2">+</span> <span style="color:#98c379">&#x27;  &#x27;</span> <span style="color:#56b6c2">+</span> <span style="color:#e06c75">password</span><span style="color:#c678dd">)</span><span style="color:#abb2bf">;</span></div>
<div class="code" style="left:0;top:152.70px;width:333.5px;text-align:right;font-size:18.43px;line-height:27.333px;color:#7e889e;padding-top:2.2px;transform:scaleY(1.08);transform-origin:0 20.78px;-webkit-text-stroke:0.15px currentColor">42</div>
<div class="code" style="left:371.0px;top:152.70px;font-size:18.43px;line-height:27.333px;color:#abb2bf;padding-top:2.2px;transform:scaleY(1.08);transform-origin:0 20.78px;-webkit-text-stroke:0.25px currentColor"></div>
<div class="code" style="left:0;top:180.03px;width:333.5px;text-align:right;font-size:18.43px;line-height:27.333px;color:#7e889e;padding-top:2.2px;transform:scaleY(1.08);transform-origin:0 20.78px;-webkit-text-stroke:0.15px currentColor">43</div>
<div class="code" style="left:371.0px;top:180.03px;font-size:18.43px;line-height:27.333px;color:#abb2bf;padding-top:2.2px;transform:scaleY(1.08);transform-origin:0 20.78px;-webkit-text-stroke:0.25px currentColor">      <span style="color:#e5c07b">this</span><span style="color:#abb2bf">.</span><span style="color:#e06c75">authService</span><span style="color:#abb2bf">.</span><span style="color:#61afef">loginUser</span><span style="color:#c678dd">(</span><span style="color:#56b6c2">{</span><span style="color:#e06c75">username</span><span style="color:#abb2bf">,</span> <span style="color:#e06c75">password</span><span style="color:#56b6c2">}</span><span style="color:#c678dd">)</span><span style="color:#abb2bf">.</span><span style="color:#61afef">subscribe</span><span style="color:#c678dd">(</span><span style="color:#56b6c2">{</span></div>
<div class="code" style="left:0;top:207.37px;width:333.5px;text-align:right;font-size:18.43px;line-height:27.333px;color:#7e889e;padding-top:2.2px;transform:scaleY(1.08);transform-origin:0 20.78px;-webkit-text-stroke:0.15px currentColor">44</div>
<div class="code" style="left:371.0px;top:207.37px;font-size:18.43px;line-height:27.333px;color:#abb2bf;padding-top:2.2px;transform:scaleY(1.08);transform-origin:0 20.78px;-webkit-text-stroke:0.25px currentColor">        <span style="color:#61afef">next</span><span style="color:#abb2bf">:</span> <span style="color:#e06c75">response</span> <span style="color:#c678dd">=&gt;</span> <span style="color:#d19a66">{</span></div>
<div class="code" style="left:0;top:234.70px;width:333.5px;text-align:right;font-size:18.43px;line-height:27.333px;color:#7e889e;padding-top:2.2px;transform:scaleY(1.08);transform-origin:0 20.78px;-webkit-text-stroke:0.15px currentColor">45</div>
<div class="code" style="left:371.0px;top:234.70px;font-size:18.43px;line-height:27.333px;color:#abb2bf;padding-top:2.2px;transform:scaleY(1.08);transform-origin:0 20.78px;-webkit-text-stroke:0.25px currentColor">          <span style="color:#c678dd">const</span> <span style="color:#e5c07b">token</span> <span style="color:#56b6c2">=</span> <span style="color:#e06c75">response</span><span style="color:#abb2bf">.</span><span style="color:#e06c75">token</span><span style="color:#abb2bf">;</span></div>
<div class="code" style="left:0;top:262.03px;width:333.5px;text-align:right;font-size:18.43px;line-height:27.333px;color:#7e889e;padding-top:2.2px;transform:scaleY(1.08);transform-origin:0 20.78px;-webkit-text-stroke:0.15px currentColor">46</div>
<div class="code" style="left:371.0px;top:262.03px;font-size:18.43px;line-height:27.333px;color:#abb2bf;padding-top:2.2px;transform:scaleY(1.08);transform-origin:0 20.78px;-webkit-text-stroke:0.25px currentColor">          <span style="color:#e5c07b">console</span><span style="color:#abb2bf">.</span><span style="color:#61afef">log</span><span style="color:#c678dd">(</span><span style="color:#e5c07b">token</span><span style="color:#c678dd">)</span><span style="color:#abb2bf">;</span></div>
<div class="code" style="left:0;top:289.36px;width:333.5px;text-align:right;font-size:18.43px;line-height:27.333px;color:#7e889e;padding-top:2.2px;transform:scaleY(1.08);transform-origin:0 20.78px;-webkit-text-stroke:0.15px currentColor">47</div>
<div class="code" style="left:371.0px;top:289.36px;font-size:18.43px;line-height:27.333px;color:#abb2bf;padding-top:2.2px;transform:scaleY(1.08);transform-origin:0 20.78px;-webkit-text-stroke:0.25px currentColor">          <span style="color:#c678dd">const</span> <span style="color:#e5c07b">payload</span> <span style="color:#56b6c2">=</span> <span style="color:#e5c07b">this</span><span style="color:#abb2bf">.</span><span style="color:#e06c75">authService</span><span style="color:#abb2bf">.</span><span style="color:#61afef">getPayload</span><span style="color:#c678dd">(</span><span style="color:#e5c07b">token</span><span style="color:#c678dd">)</span><span style="color:#abb2bf">;</span></div>
<div class="code" style="left:0;top:316.70px;width:333.5px;text-align:right;font-size:18.43px;line-height:27.333px;color:#7e889e;padding-top:2.2px;transform:scaleY(1.08);transform-origin:0 20.78px;-webkit-text-stroke:0.15px currentColor">48</div>
<div class="code" style="left:371.0px;top:316.70px;font-size:18.43px;line-height:27.333px;color:#abb2bf;padding-top:2.2px;transform:scaleY(1.08);transform-origin:0 20.78px;-webkit-text-stroke:0.25px currentColor"></div>
<div class="code" style="left:0;top:344.03px;width:333.5px;text-align:right;font-size:18.43px;line-height:27.333px;color:#7e889e;padding-top:2.2px;transform:scaleY(1.08);transform-origin:0 20.78px;-webkit-text-stroke:0.15px currentColor">49</div>
<div class="code" style="left:371.0px;top:344.03px;font-size:18.43px;line-height:27.333px;color:#abb2bf;padding-top:2.2px;transform:scaleY(1.08);transform-origin:0 20.78px;-webkit-text-stroke:0.25px currentColor">          <span style="color:#c678dd">const</span> <span style="color:#e5c07b">user</span> <span style="color:#56b6c2">=</span> <span style="color:#c678dd">{</span> <span style="color:#e06c75">username</span><span style="color:#abb2bf">:</span> <span style="color:#e5c07b">payload</span><span style="color:#abb2bf">.</span><span style="color:#e06c75">sub</span> <span style="color:#c678dd">}</span><span style="color:#abb2bf">;</span></div>
<div class="code" style="left:0;top:371.36px;width:333.5px;text-align:right;font-size:18.43px;line-height:27.333px;color:#7e889e;padding-top:2.2px;transform:scaleY(1.08);transform-origin:0 20.78px;-webkit-text-stroke:0.15px currentColor">50</div>
<div class="code" style="left:371.0px;top:371.36px;font-size:18.43px;line-height:27.333px;color:#abb2bf;padding-top:2.2px;transform:scaleY(1.08);transform-origin:0 20.78px;-webkit-text-stroke:0.25px currentColor">          <span style="color:#c678dd">const</span> <span style="color:#e5c07b">login</span> <span style="color:#56b6c2">=</span> <span style="color:#c678dd">{</span></div>
<div class="code" style="left:0;top:398.70px;width:333.5px;text-align:right;font-size:18.43px;line-height:27.333px;color:#7e889e;padding-top:2.2px;transform:scaleY(1.08);transform-origin:0 20.78px;-webkit-text-stroke:0.15px currentColor">51</div>
<div class="code" style="left:371.0px;top:398.70px;font-size:18.43px;line-height:27.333px;color:#abb2bf;padding-top:2.2px;transform:scaleY(1.08);transform-origin:0 20.78px;-webkit-text-stroke:0.25px currentColor">            <span style="color:#e06c75">user</span><span style="color:#abb2bf">,</span></div>
<div class="code" style="left:0;top:426.03px;width:333.5px;text-align:right;font-size:18.43px;line-height:27.333px;color:#7e889e;padding-top:2.2px;transform:scaleY(1.08);transform-origin:0 20.78px;-webkit-text-stroke:0.15px currentColor">52</div>
<div class="code" style="left:371.0px;top:426.03px;font-size:18.43px;line-height:27.333px;color:#abb2bf;padding-top:2.2px;transform:scaleY(1.08);transform-origin:0 20.78px;-webkit-text-stroke:0.25px currentColor">            <span style="color:#e06c75">isAuth</span><span style="color:#abb2bf">:</span> <span style="color:#d19a66">true</span><span style="color:#abb2bf">,</span></div>
<div class="code" style="left:0;top:453.36px;width:333.5px;text-align:right;font-size:18.43px;line-height:27.333px;color:#7e889e;padding-top:2.2px;transform:scaleY(1.08);transform-origin:0 20.78px;-webkit-text-stroke:0.15px currentColor">53</div>
<div class="code" style="left:371.0px;top:453.36px;font-size:18.43px;line-height:27.333px;color:#abb2bf;padding-top:2.2px;transform:scaleY(1.08);transform-origin:0 20.78px;-webkit-text-stroke:0.25px currentColor">            <span style="color:#e06c75">isAdmin</span><span style="color:#abb2bf">:</span> <span style="color:#e5c07b">payload</span><span style="color:#abb2bf">.</span><span style="color:#e06c75">isAdmin</span></div>
<div class="code" style="left:0;top:480.69px;width:333.5px;text-align:right;font-size:18.43px;line-height:27.333px;color:#7e889e;padding-top:2.2px;transform:scaleY(1.08);transform-origin:0 20.78px;-webkit-text-stroke:0.15px currentColor">54</div>
<div class="code" style="left:371.0px;top:480.69px;font-size:18.43px;line-height:27.333px;color:#abb2bf;padding-top:2.2px;transform:scaleY(1.08);transform-origin:0 20.78px;-webkit-text-stroke:0.25px currentColor">          <span style="color:#c678dd">}</span><span style="color:#abb2bf">;</span></div>
<div class="code" style="left:0;top:508.03px;width:333.5px;text-align:right;font-size:18.43px;line-height:27.333px;color:#c6cbd6;padding-top:2.2px;transform:scaleY(1.08);transform-origin:0 20.78px;-webkit-text-stroke:0.15px currentColor">55</div>
<div class="code" style="left:371.0px;top:508.03px;font-size:18.43px;line-height:27.333px;color:#abb2bf;padding-top:2.2px;transform:scaleY(1.08);transform-origin:0 20.78px;-webkit-text-stroke:0.25px currentColor">          <span style="color:#e5c07b">this</span><span style="color:#abb2bf">.</span><span style="color:#e06c75">authService</span><span style="color:#abb2bf">.</span><span style="color:#e06c75">token</span> <span style="color:#56b6c2">=</span> <span style="color:#e5c07b">token</span><span style="color:#abb2bf">;</span></div>
<div class="code" style="left:0;top:535.36px;width:333.5px;text-align:right;font-size:18.43px;line-height:27.333px;color:#7e889e;padding-top:2.2px;transform:scaleY(1.08);transform-origin:0 20.78px;-webkit-text-stroke:0.15px currentColor">56</div>
<div class="code" style="left:371.0px;top:535.36px;font-size:18.43px;line-height:27.333px;color:#abb2bf;padding-top:2.2px;transform:scaleY(1.08);transform-origin:0 20.78px;-webkit-text-stroke:0.25px currentColor">          <span style="color:#e5c07b">this</span><span style="color:#abb2bf">.</span><span style="color:#e06c75">authService</span><span style="color:#abb2bf">.</span><span style="color:#e06c75">user</span> <span style="color:#56b6c2">=</span> <span style="color:#e5c07b">login</span><span style="color:#abb2bf">;</span></div>
<div class="code" style="left:0;top:562.69px;width:333.5px;text-align:right;font-size:18.43px;line-height:27.333px;color:#7e889e;padding-top:2.2px;transform:scaleY(1.08);transform-origin:0 20.78px;-webkit-text-stroke:0.15px currentColor">57</div>
<div class="code" style="left:371.0px;top:562.69px;font-size:18.43px;line-height:27.333px;color:#abb2bf;padding-top:2.2px;transform:scaleY(1.08);transform-origin:0 20.78px;-webkit-text-stroke:0.25px currentColor">          <span style="color:#e5c07b">this</span><span style="color:#abb2bf">.</span><span style="color:#e06c75">router</span><span style="color:#abb2bf">.</span><span style="color:#61afef">navigate</span><span style="color:#c678dd">(</span><span style="color:#56b6c2">[</span><span style="color:#98c379">&#x27;/users/page/0&#x27;</span><span style="color:#56b6c2">]</span><span style="color:#c678dd">)</span><span style="color:#abb2bf">;</span></div>
<div class="code" style="left:0;top:590.03px;width:333.5px;text-align:right;font-size:18.43px;line-height:27.333px;color:#7e889e;padding-top:2.2px;transform:scaleY(1.08);transform-origin:0 20.78px;-webkit-text-stroke:0.15px currentColor">58</div>
<div class="code" style="left:371.0px;top:590.03px;font-size:18.43px;line-height:27.333px;color:#abb2bf;padding-top:2.2px;transform:scaleY(1.08);transform-origin:0 20.78px;-webkit-text-stroke:0.25px currentColor">        <span style="color:#d19a66">}</span><span style="color:#abb2bf">,</span></div>
<div class="code" style="left:0;top:617.36px;width:333.5px;text-align:right;font-size:18.43px;line-height:27.333px;color:#7e889e;padding-top:2.2px;transform:scaleY(1.08);transform-origin:0 20.78px;-webkit-text-stroke:0.15px currentColor">59</div>
<div class="code" style="left:371.0px;top:617.36px;font-size:18.43px;line-height:27.333px;color:#abb2bf;padding-top:2.2px;transform:scaleY(1.08);transform-origin:0 20.78px;-webkit-text-stroke:0.25px currentColor">        <span style="color:#61afef">error</span><span style="color:#abb2bf">:</span> <span style="color:#e06c75">error</span> <span style="color:#c678dd">=&gt;</span> <span style="color:#d19a66">{</span></div>
<div class="code" style="left:0;top:644.69px;width:333.5px;text-align:right;font-size:18.43px;line-height:27.333px;color:#7e889e;padding-top:2.2px;transform:scaleY(1.08);transform-origin:0 20.78px;-webkit-text-stroke:0.15px currentColor">60</div>
<div class="code" style="left:371.0px;top:644.69px;font-size:18.43px;line-height:27.333px;color:#abb2bf;padding-top:2.2px;transform:scaleY(1.08);transform-origin:0 20.78px;-webkit-text-stroke:0.25px currentColor">          <span style="color:#c678dd">if</span> <span style="color:#c678dd">(</span><span style="color:#e06c75">error</span><span style="color:#abb2bf">.</span><span style="color:#e06c75">status</span> <span style="color:#56b6c2">==</span> <span style="color:#d19a66">401</span><span style="color:#c678dd">)</span> <span style="color:#c678dd">{</span></div>
<div class="code" style="left:0;top:672.03px;width:333.5px;text-align:right;font-size:18.43px;line-height:27.333px;color:#7e889e;padding-top:2.2px;transform:scaleY(1.08);transform-origin:0 20.78px;-webkit-text-stroke:0.15px currentColor">61</div>
<div class="code" style="left:371.0px;top:672.03px;font-size:18.43px;line-height:27.333px;color:#abb2bf;padding-top:2.2px;transform:scaleY(1.08);transform-origin:0 20.78px;-webkit-text-stroke:0.25px currentColor">            <span style="color:#e5c07b">Swal</span><span style="color:#abb2bf">.</span><span style="color:#61afef">fire</span><span style="color:#56b6c2">(</span><span style="color:#98c379">&#x27;Login error&#x27;</span><span style="color:#abb2bf">,</span> <span style="color:#e06c75">error</span><span style="color:#abb2bf">.</span><span style="color:#e5c07b">error</span><span style="color:#abb2bf">.</span><span style="color:#e06c75">message</span><span style="color:#abb2bf">,</span> <span style="color:#98c379">&#x27;error&#x27;</span><span style="color:#56b6c2">)</span><span style="color:#abb2bf">;</span></div>
<div class="code" style="left:0;top:699.36px;width:333.5px;text-align:right;font-size:18.43px;line-height:27.333px;color:#7e889e;padding-top:2.2px;transform:scaleY(1.08);transform-origin:0 20.78px;-webkit-text-stroke:0.15px currentColor">62</div>
<div class="code" style="left:371.0px;top:699.36px;font-size:18.43px;line-height:27.333px;color:#abb2bf;padding-top:2.2px;transform:scaleY(1.08);transform-origin:0 20.78px;-webkit-text-stroke:0.25px currentColor">          <span style="color:#c678dd">}</span> <span style="color:#c678dd">else</span> <span style="color:#c678dd">{</span></div>
<div class="code" style="left:0;top:726.69px;width:333.5px;text-align:right;font-size:18.43px;line-height:27.333px;color:#7e889e;padding-top:2.2px;transform:scaleY(1.08);transform-origin:0 20.78px;-webkit-text-stroke:0.15px currentColor">63</div>
<div class="code" style="left:371.0px;top:726.69px;font-size:18.43px;line-height:27.333px;color:#abb2bf;padding-top:2.2px;transform:scaleY(1.08);transform-origin:0 20.78px;-webkit-text-stroke:0.25px currentColor">            <span style="color:#c678dd">throw</span> <span style="color:#e06c75">error</span><span style="color:#abb2bf">;</span></div>
<div class="code" style="left:0;top:754.02px;width:333.5px;text-align:right;font-size:18.43px;line-height:27.333px;color:#7e889e;padding-top:2.2px;transform:scaleY(1.08);transform-origin:0 20.78px;-webkit-text-stroke:0.15px currentColor">64</div>
<div class="code" style="left:371.0px;top:754.02px;font-size:18.43px;line-height:27.333px;color:#abb2bf;padding-top:2.2px;transform:scaleY(1.08);transform-origin:0 20.78px;-webkit-text-stroke:0.25px currentColor">          <span style="color:#c678dd">}</span></div>
<div class="code" style="left:0;top:781.36px;width:333.5px;text-align:right;font-size:18.43px;line-height:27.333px;color:#7e889e;padding-top:2.2px;transform:scaleY(1.08);transform-origin:0 20.78px;-webkit-text-stroke:0.15px currentColor">65</div>
<div class="code" style="left:371.0px;top:781.36px;font-size:18.43px;line-height:27.333px;color:#abb2bf;padding-top:2.2px;transform:scaleY(1.08);transform-origin:0 20.78px;-webkit-text-stroke:0.25px currentColor">        <span style="color:#d19a66">}</span></div>
<div class="code" style="left:0;top:808.69px;width:333.5px;text-align:right;font-size:18.43px;line-height:27.333px;color:#7e889e;padding-top:2.2px;transform:scaleY(1.08);transform-origin:0 20.78px;-webkit-text-stroke:0.15px currentColor">66</div>
<div class="code" style="left:371.0px;top:808.69px;font-size:18.43px;line-height:27.333px;color:#abb2bf;padding-top:2.2px;transform:scaleY(1.08);transform-origin:0 20.78px;-webkit-text-stroke:0.25px currentColor">      <span style="color:#56b6c2">}</span><span style="color:#c678dd">)</span><span style="color:#abb2bf">;</span></div>
<div class="code" style="left:0;top:836.02px;width:333.5px;text-align:right;font-size:18.43px;line-height:27.333px;color:#7e889e;padding-top:2.2px;transform:scaleY(1.08);transform-origin:0 20.78px;-webkit-text-stroke:0.15px currentColor">67</div>
<div class="code" style="left:371.0px;top:836.02px;font-size:18.43px;line-height:27.333px;color:#abb2bf;padding-top:2.2px;transform:scaleY(1.08);transform-origin:0 20.78px;-webkit-text-stroke:0.25px currentColor">    <span style="color:#d19a66">}</span><span style="color:#56b6c2">)</span><span style="color:#abb2bf">;</span></div>
<div class="code" style="left:0;top:863.36px;width:333.5px;text-align:right;font-size:18.43px;line-height:27.333px;color:#7e889e;padding-top:2.2px;transform:scaleY(1.08);transform-origin:0 20.78px;-webkit-text-stroke:0.15px currentColor">68</div>
<div class="code" style="left:371.0px;top:863.36px;font-size:18.43px;line-height:27.333px;color:#abb2bf;padding-top:2.2px;transform:scaleY(1.08);transform-origin:0 20.78px;-webkit-text-stroke:0.25px currentColor">  <span style="color:#c678dd">}</span></div>
<div class="code" style="left:0;top:890.69px;width:333.5px;text-align:right;font-size:18.43px;line-height:27.333px;color:#7e889e;padding-top:2.2px;transform:scaleY(1.08);transform-origin:0 20.78px;-webkit-text-stroke:0.15px currentColor">69</div>
<div class="code" style="left:371.0px;top:890.69px;font-size:18.43px;line-height:27.333px;color:#abb2bf;padding-top:2.2px;transform:scaleY(1.08);transform-origin:0 20.78px;-webkit-text-stroke:0.25px currentColor"></div>
<div class="code" style="left:0;top:918.02px;width:333.5px;text-align:right;font-size:18.43px;line-height:27.333px;color:#7e889e;padding-top:2.2px;transform:scaleY(1.08);transform-origin:0 20.78px;-webkit-text-stroke:0.15px currentColor">70</div>
<div class="code" style="left:371.0px;top:918.02px;font-size:18.43px;line-height:27.333px;color:#abb2bf;padding-top:2.2px;transform:scaleY(1.08);transform-origin:0 20.78px;-webkit-text-stroke:0.25px currentColor">  <span style="color:#61afef">pageUsersEvent</span><span style="color:#c678dd">()</span> <span style="color:#c678dd">{</span></div>
<div class="r" style="left:825.5px;top:509px;width:2px;height:26px;background:#528bff"></div>
</body></html>
